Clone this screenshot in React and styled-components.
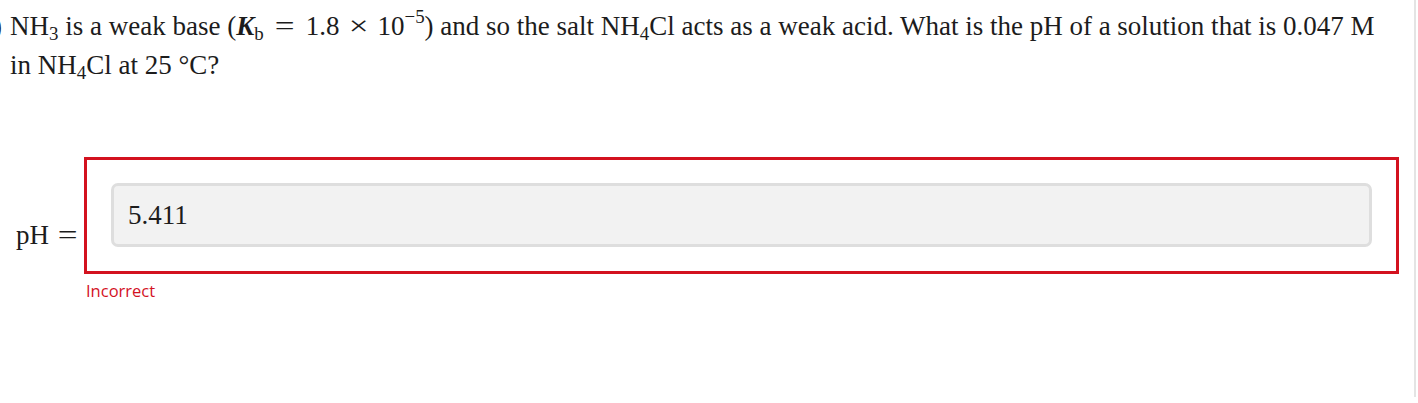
import React from "react";
import styled, { createGlobalStyle } from "styled-components";

const GlobalStyle = createGlobalStyle`
  body {
    margin: 0;
    background: #ffffff;
    font-family: "Liberation Serif", "Times New Roman", serif;
    color: #1c1c1c;
  }
`;

const Page = styled.div`
  width: 1416px;
  height: 397px;
  border-right: 2px solid #e4e4e4;
  box-sizing: border-box;
  overflow: hidden;
`;

const Question = styled.div`
  position: relative;
  padding: 7px 0 0 10px;
  font-size: 27px;
  line-height: 39px;
  white-space: nowrap;

  sub,
  sup {
    font-size: 0.7em;
    line-height: 0;
  }
  sub {
    vertical-align: -0.28em;
  }
  sup {
    vertical-align: 0.66em;
  }
`;

const Clip = styled.span`
  position: absolute;
  left: -7px;
  top: 7px;
`;

const Math = styled.span`
  font-style: ${(props) => (props.italic ? "italic" : "normal")};
  font-weight: ${(props) => (props.bold ? "bold" : "normal")};
`;

const Op = styled.span`
  display: inline-block;
  transform: scaleX(1.3);
  margin: 0 ${(props) => props.space || "0.42em"};
`;

const AnswerRow = styled.div`
  display: flex;
  align-items: center;
  margin-top: 72px;
  padding-left: 16px;
  padding-right: 15px;
`;

const Label = styled.div`
  font-size: 27px;
  width: 68px;
  padding-top: 40px;
  white-space: nowrap;
`;

const AnswerBox = styled.div`
  flex: 1;
  border: 3px solid #d3121f;
  padding: 23px 24px 24px;
`;

const Field = styled.div`
  height: 58px;
  background: #f2f2f2;
  border: 3px solid #dedede;
  border-radius: 7px;
  padding: 0 14px;
  font-size: 27px;
  line-height: 58px;
  color: #1c1c1c;
`;

const Feedback = styled.div`
  margin: 5px 0 0 86px;
  font-family: "Open Sans", sans-serif;
  font-size: 16.5px;
  color: #d3121f;
`;

export default function App() {
  return (
    <>
      <GlobalStyle />
      <Page>
        <Question>
          <Clip>)</Clip>
          NH<sub>3</sub> is a weak base (<Math italic bold>K</Math>
          <sub>b</sub>
          <Op space="0.5em">=</Op>1.8<Op>×</Op>10<sup>−5</sup>) and so the salt NH<sub>4</sub>Cl
          acts as a weak acid. What is the pH of a solution that is 0.047 M
          <br />
          in NH<sub>4</sub>Cl at 25 °C?
        </Question>
        <AnswerRow>
          <Label>
            pH<Op space="0.4em">=</Op>
          </Label>
          <AnswerBox>
            <Field>5.411</Field>
          </AnswerBox>
        </AnswerRow>
        <Feedback>Incorrect</Feedback>
      </Page>
    </>
  );
}
